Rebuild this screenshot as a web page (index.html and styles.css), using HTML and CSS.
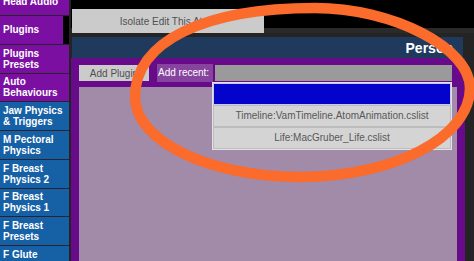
FILE: index.html
```html
<!DOCTYPE html>
<html lang="en">
<head>
    <meta charset="UTF-8">
    <title>Plugins</title>
    <link rel="stylesheet" href="styles.css">
</head>
<body>

<div class="sidebar">
    <div class="tab">Head Audio</div>
    <div class="tab selected">Plugins</div>
    <div class="tab">Plugins<br>Presets</div>
    <div class="tab">Auto<br>Behaviours</div>
    <div class="tab blue">Jaw Physics<br>&amp; Triggers</div>
    <div class="tab blue">M Pectoral<br>Physics</div>
    <div class="tab blue">F Breast<br>Physics 2</div>
    <div class="tab blue">F Breast<br>Physics 1</div>
    <div class="tab blue">F Breast<br>Presets</div>
    <div class="tab blue">F Glute<br>Physics</div>
</div>

<div class="main">
    <div class="toolbar">
        <button class="btn isolate">Isolate Edit This Atom</button>
    </div>
    <div class="header">Person</div>
    <div class="panel">
        <div class="row">
            <button class="btn add-plugin">Add Plugin</button>
            <div class="recent-label">Add recent:</div>
            <div class="dropdown">
                <div class="popup">
                    <div class="item active"></div>
                    <div class="item">Timeline:VamTimeline.AtomAnimation.cslist</div>
                    <div class="item">Life:MacGruber_Life.cslist</div>
                </div>
            </div>
        </div>
        <div class="plugin-list"></div>
    </div>
</div>

<!-- annotation drawn over the screenshot -->
<svg class="mark" width="474" height="261" viewBox="0 0 474 261">
    <path d="M135 97 C135 42 203 8 315 8 C393 8 470 48 470 88 C470 137 394 177 300 177 C209 177 135 141 135 97 Z"
          fill="none" stroke="#fa6b2c" stroke-width="10.5"/>
</svg>

</body>
</html>
```

FILE: styles.css
```css
body {
    margin: 0;
    width: 474px;
    height: 261px;
    overflow: hidden;
    display: flex;
    background-color: #242424;
    font-family: "Liberation Sans", Arial, sans-serif;
}
.sidebar {
    width: 69px;
    margin-top: -12.75px;
    display: flex;
    flex-direction: column;
    gap: 1px;
    background-color: #2a2230;
    flex-shrink: 0;
}
.tab {
    height: 27.75px;
    flex-shrink: 0;
    box-sizing: border-box;
    padding-left: 3px;
    display: flex;
    align-items: center;
    background-color: #7a0fa2;
    color: #fff;
    font-size: 10px;
    font-weight: bold;
    line-height: 11px;
}
.tab.selected {
    border-right: 6px solid #000;
}
.tab.blue {
    background-color: #1660a6;
}
.main {
    flex: 1;
    margin-left: 2px;
    display: flex;
    flex-direction: column;
}
.toolbar {
    height: 33px;
    box-sizing: border-box;
    padding: 9px 0 0 1px;
    background: linear-gradient(#000 28px, #2a2a2a 28px);
}
.btn {
    border: none;
    padding: 0;
    background-color: #cbcbcb;
    color: #505050;
    font-family: inherit;
    font-size: 10px;
}
.isolate {
    width: 192px;
    height: 24px;
    display: block;
}
.header {
    height: 21px;
    margin: 4px 11px 0 1px;
    padding-right: 10px;
    background-color: #203a5e;
    color: #fff;
    font-size: 14px;
    font-weight: bold;
    line-height: 22px;
    text-align: right;
}
.panel {
    flex: 1;
    margin-right: 9px;
    padding: 6px 8px 0 8px;
    background-color: #680b8a;
    display: flex;
    flex-direction: column;
}
.row {
    height: 18px;
    display: flex;
    align-items: center;
}
.add-plugin {
    width: 70px;
    height: 16px;
}
.recent-label {
    width: 55px;
    height: 18px;
    margin-left: 8px;
    padding-left: 1px;
    background-color: #86449e;
    color: #fff;
    font-size: 10px;
    line-height: 18px;
}
.dropdown {
    position: relative;
    flex: 1;
    height: 16px;
    margin: 0 5px 0 2px;
    background-color: #9a9a9a;
}
.popup {
    position: absolute;
    left: -3px;
    top: 17px;
    width: 240px;
    box-sizing: border-box;
    padding: 1px;
    display: flex;
    flex-direction: column;
    gap: 2px;
    background-color: #bdbdbd;
    border: 1px solid #e2e2e2;
    z-index: 2;
}
.item {
    height: 20px;
    background-color: #d4d4d4;
    color: #585858;
    font-size: 10px;
    line-height: 20px;
    text-align: center;
}
.item.active {
    background-color: #0303cc;
    outline: 1px solid #c8c8ee;
}
.plugin-list {
    flex: 1;
    margin-top: 5px;
    background-color: #a28aa9;
}
.mark {
    position: absolute;
    left: 0;
    top: 0;
    pointer-events: none;
    z-index: 5;
}
```
